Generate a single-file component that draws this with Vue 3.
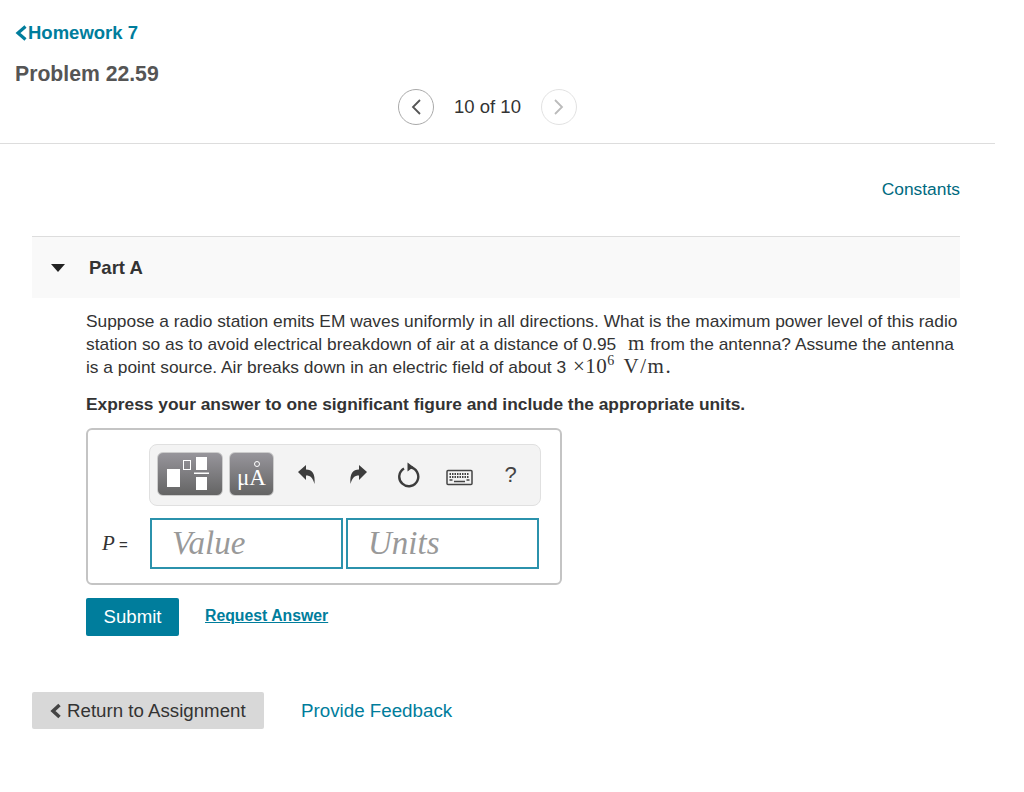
<script setup>
const intro = 'Suppose a radio station emits EM waves uniformly in all directions. What is the maximum power level of this radio station so as to avoid electrical breakdown of air at a distance of 0.95'
const middle = 'from the antenna? Assume the antenna is a point source. Air breaks down in an electric field of about 3'
</script>

<template>
  <div class="page">
    <header class="top">
      <a class="back">
        <svg width="13" height="16" viewBox="0 0 13 16"><path d="M10.500 1.500 3 8l7.500 6.500" fill="none" stroke="#007d9c" stroke-width="3.200"/></svg>
        Homework 7
      </a>
      <h1>Problem 22.59</h1>
      <nav class="pager">
        <span class="circle">
          <svg width="14" height="18" viewBox="0 0 14 18"><path d="M11 2 4 9l7 7" fill="none" stroke="#555" stroke-width="1.800"/></svg>
        </span>
        <span class="count">10 of 10</span>
        <span class="circle off">
          <svg width="14" height="18" viewBox="0 0 14 18"><path d="M3 2l7 7-7 7" fill="none" stroke="#bbb" stroke-width="1.800"/></svg>
        </span>
      </nav>
    </header>

    <main class="content">
      <div class="constants"><a>Constants</a></div>

      <section class="part">
        <div class="part-head">
          <span class="caret"></span>
          <h2>Part A</h2>
        </div>

        <div class="part-body">
          <p class="question">
            {{ intro }} <span class="math unit-m">m</span> {{ middle }} <span class="math power">×10<sup>6</sup></span> <span class="math volts">V/m.</span>
          </p>
          <p class="express">Express your answer to one significant figure and include the appropriate units.</p>

          <div class="answer">
            <div class="toolbar">
              <span class="tool wide">
                <svg width="54" height="36" viewBox="0 0 54 36">
                  <rect x="4" y="13" width="13" height="18" fill="#fff"/>
                  <rect x="20.500" y="4.500" width="7" height="9" fill="none" stroke="#fff"/>
                  <rect x="33" y="1" width="11" height="13" fill="#fff"/>
                  <rect x="31" y="16.500" width="15" height="1.500" fill="#fff"/>
                  <rect x="33" y="21" width="11" height="13" fill="#fff"/>
                </svg>
              </span>
              <span class="tool unit"><span class="ring"></span>μA</span>
              <span class="slot first">
                <svg width="20" height="22" viewBox="0 0 20 22"><path d="M1 8 9 1v4.500c6 0 9.500 4 8.500 14.500C16 14 13.500 11.500 9 11.500V16z" fill="#3c3c3c"/></svg>
              </span>
              <span class="slot">
                <svg width="20" height="22" viewBox="0 0 20 22"><path d="M19 8 11 1v4.500C5 5.500 1.500 9.500 2.500 20 4 14 6.500 11.500 11 11.500V16z" fill="#3c3c3c"/></svg>
              </span>
              <span class="slot">
                <svg width="24" height="26" viewBox="0 0 24 26"><path d="M7 6.500a9.500 9.500 0 1 0 6-1.200" fill="none" stroke="#3c3c3c" stroke-width="2.400"/><path d="M10.500 .5 16.500 5 10.500 9.500z" fill="#3c3c3c"/></svg>
              </span>
              <span class="slot">
                <svg class="keys" width="27" height="17" viewBox="0 0 27 17">
                  <rect x="1" y="1.500" width="25" height="14" rx="1" fill="#f3f3f3" stroke="#444" stroke-width="1.500"/>
                  <path d="M3.500 5h20M3.500 8h20" stroke="#444" stroke-width="1.800" stroke-dasharray="1.500 1"/>
                  <path d="M3.500 11h3M8 12.500h11M20.500 11h3" stroke="#444" stroke-width="1.500"/>
                </svg>
              </span>
              <span class="slot help">?</span>
            </div>
            <div class="fields">
              <label class="var"><i>P</i> =</label>
              <input class="field" placeholder="Value" />
              <input class="field" placeholder="Units" />
            </div>
          </div>

          <div class="actions">
            <button class="submit">Submit</button>
            <a class="request">Request Answer</a>
          </div>
        </div>
      </section>

      <footer class="foot">
        <button class="return">
          <svg width="13" height="16" viewBox="0 0 13 16"><path d="M10.500 2 4 8l6.500 6" fill="none" stroke="#444" stroke-width="3.500"/></svg>
          Return to Assignment
        </button>
        <a class="feedback">Provide Feedback</a>
      </footer>
    </main>
  </div>
</template>

<style scoped>
.page {
  width: 995px;
  height: 792px;
  overflow: hidden;
  font-family: "Liberation Sans", Arial, sans-serif;
  color: #333;
  font-size: 17px;
}

.top {
  height: 144px;
  box-sizing: border-box;
  border-bottom: 1px solid #ddd;
  padding: 22px 0 0 15px;
}

.back {
  display: flex;
  align-items: center;
  height: 22px;
  color: #007d9c;
  font-size: 18.500px;
  font-weight: 700;
}

h1 {
  margin: 18px 0 0;
  font-size: 21.200px;
  line-height: 24px;
  font-weight: 700;
  color: #555;
}

.pager {
  display: flex;
  align-items: center;
  justify-content: center;
  margin: 3px 0 0 -15px;
  gap: 20px;
  width: 975px;
}

.circle {
  display: flex;
  align-items: center;
  justify-content: center;
  box-sizing: border-box;
  width: 36px;
  height: 36px;
  border: 1px solid #aaa;
  border-radius: 50%;
}

.circle.off {
  border-color: #e2e2e2;
}

.count {
  font-size: 18.500px;
  color: #333;
}

.content {
  padding: 0 35px 0 32px;
}

.constants {
  margin-top: 35px;
  height: 21px;
  line-height: 21px;
  text-align: right;
  font-size: 17.400px;
  color: #006a7f;
}

.part {
  margin-top: 36px;
}

.part-head {
  display: flex;
  align-items: center;
  height: 62px;
  box-sizing: border-box;
  border-top: 1px solid #ddd;
  background: #f9f9f9;
  padding-left: 19px;
}

.caret {
  width: 0;
  height: 0;
  border-left: 7px solid transparent;
  border-right: 7px solid transparent;
  border-top: 8px solid #222;
  margin-right: 24px;
}

h2 {
  margin: 0;
  font-size: 18.500px;
  font-weight: 700;
  color: #333;
}

.part-body {
  padding: 12px 0 0 54px;
}

.question {
  margin: 0;
  font-size: 17.350px;
  line-height: 23px;
  color: #333;
}

.math {
  font-family: "Liberation Serif", serif;
  font-size: 21px;
  line-height: 0;
}

.unit-m {
  margin: 0 1px 0 7px;
}

.power {
  margin-left: 2px;
  letter-spacing: 0.500px;
}

.volts {
  margin-left: 4px;
  letter-spacing: 1.500px;
}

sup {
  font-size: 14px;
  line-height: 0;
}

.express {
  margin: 14px 0 0;
  font-size: 17.350px;
  line-height: 23px;
  font-weight: 700;
  color: #333;
}

.answer {
  box-sizing: border-box;
  width: 476px;
  height: 157px;
  margin-top: 12px;
  border: 2px solid #c4c4c4;
  border-radius: 6px;
  padding: 14px 0 0 12px;
}

.toolbar {
  display: flex;
  align-items: center;
  box-sizing: border-box;
  width: 392px;
  height: 62px;
  margin-left: 49px;
  border: 1px solid #e0e0e0;
  border-radius: 8px;
  background: #f3f3f3;
  padding-left: 7px;
}

.tool {
  position: relative;
  box-sizing: border-box;
  height: 44px;
  margin-bottom: 2px;
  border: 1px solid #ccc;
  border-radius: 6px;
  background: linear-gradient(#97959b, #646464);
  display: flex;
  align-items: center;
  justify-content: center;
}

.tool.wide {
  width: 66px;
  margin-right: 6px;
}

.tool.unit {
  width: 45px;
  color: #fff;
  font-family: "Liberation Serif", serif;
  font-size: 23px;
  padding-top: 8px;
}

.ring {
  position: absolute;
  top: 8px;
  left: 24px;
  width: 4px;
  height: 4px;
  border: 1px solid #fff;
  border-radius: 50%;
}

.slot {
  flex: none;
  display: flex;
  align-items: center;
  justify-content: center;
  width: 51px;
}

.slot.first {
  margin-left: 7px;
}

.keys {
  margin-top: 4px;
}

.help {
  font-size: 22px;
  color: #444;
}

.fields {
  display: flex;
  align-items: center;
  margin-top: 12px;
}

.var {
  flex: none;
  width: 50px;
  padding-left: 2px;
  box-sizing: border-box;
  font-size: 15px;
  color: #333;
}

.var i {
  font-family: "Liberation Serif", serif;
  font-size: 21px;
}

.field {
  flex: none;
  box-sizing: border-box;
  width: 193px;
  height: 51px;
  margin-right: 3px;
  border: 2px solid #2b92ac;
  border-radius: 0;
  padding: 0 0 0 20px;
  background: #fff;
  font-family: "Liberation Serif", serif;
  font-style: italic;
  font-size: 33px;
  outline: none;
}

.field::placeholder {
  color: #999;
  opacity: 1;
}

.actions {
  display: flex;
  align-items: flex-start;
  margin-top: 13px;
}

.submit {
  width: 93px;
  height: 38px;
  border: none;
  border-radius: 2px;
  background: #007d9c;
  color: #fff;
  font-family: inherit;
  font-size: 18.600px;
}

.request {
  margin: 7px 0 0 26px;
  color: #007d9c;
  font-size: 15.800px;
  line-height: 22px;
  font-weight: 700;
  text-decoration: underline;
}

.foot {
  display: flex;
  align-items: center;
  margin-top: 56px;
}

.return {
  display: flex;
  align-items: center;
  gap: 5px;
  width: 232px;
  height: 37px;
  border: none;
  border-radius: 2px;
  padding: 0 0 0 17px;
  background: #d8d8d8;
  color: #333;
  font-family: inherit;
  font-size: 18.700px;
}

.feedback {
  margin-left: 37px;
  color: #007d9c;
  font-size: 18.750px;
}
</style>
